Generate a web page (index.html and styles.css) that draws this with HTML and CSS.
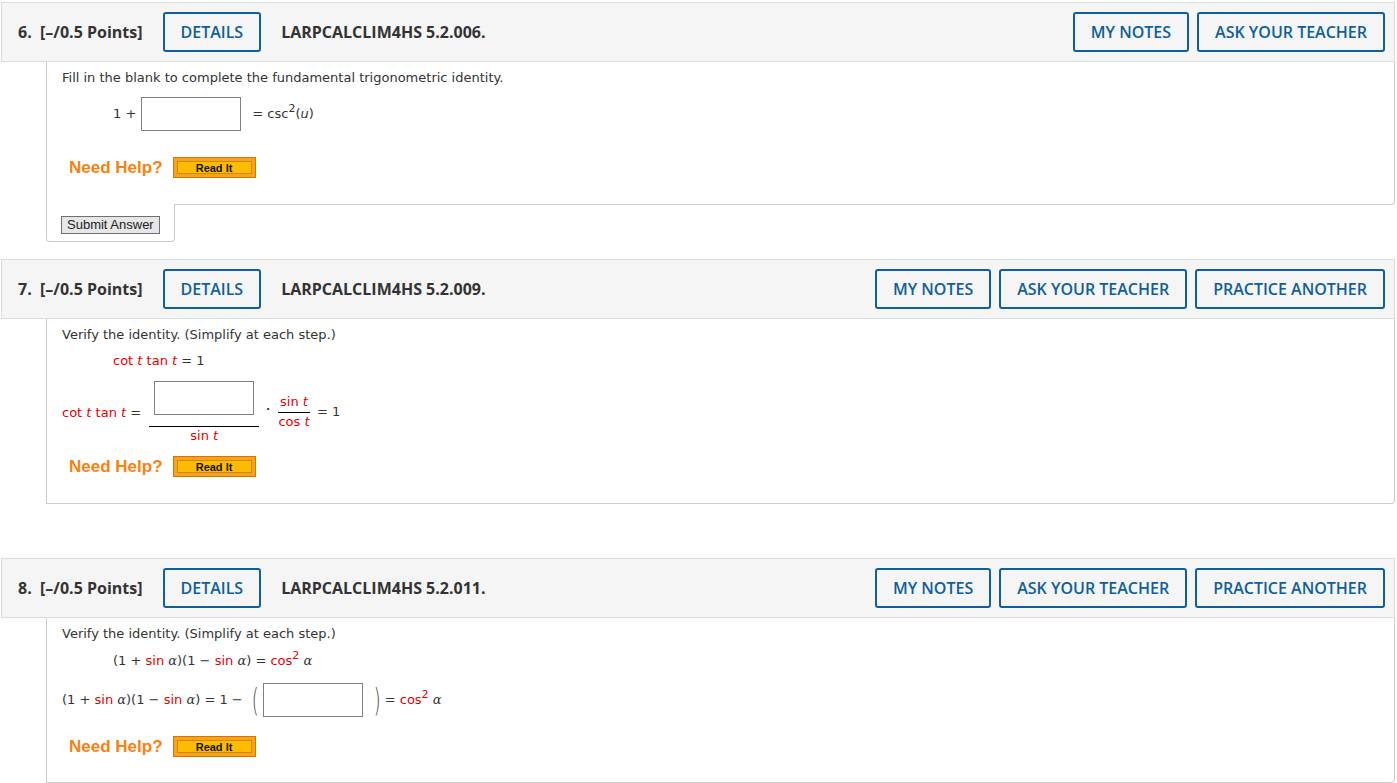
FILE: index.html
```html
<!DOCTYPE html>
<html>
<head>
<meta charset="utf-8">
<link rel="stylesheet" href="styles.css">
</head>
<body>
<div class="page">

  <section class="question q6">
    <div class="q-header">
      <span class="q-num">6.&nbsp; [–/0.5 Points]</span>
      <button class="hbtn">DETAILS</button>
      <span class="q-code">LARPCALCLIM4HS 5.2.006.</span>
      <span class="spacer"></span>
      <button class="hbtn">MY NOTES</button>
      <button class="hbtn">ASK YOUR TEACHER</button>
    </div>
    <div class="q-body">
      <p class="prompt">Fill in the blank to complete the fundamental trigonometric identity.</p>
      <div class="eq eq-fill">
        <span class="m">1 +</span>
        <span class="ans"></span>
        <span class="m">= csc<sup>2</sup>(<i>u</i>)</span>
      </div>
      <div class="help">
        <span class="need">Need Help?</span>
        <button class="readit">Read It</button>
      </div>
    </div>
    <div class="submit-tab">
      <button class="submit">Submit Answer</button>
    </div>
  </section>

  <section class="question q7">
    <div class="q-header">
      <span class="q-num">7.&nbsp; [–/0.5 Points]</span>
      <button class="hbtn">DETAILS</button>
      <span class="q-code">LARPCALCLIM4HS 5.2.009.</span>
      <span class="spacer"></span>
      <button class="hbtn">MY NOTES</button>
      <button class="hbtn">ASK YOUR TEACHER</button>
      <button class="hbtn">PRACTICE ANOTHER</button>
    </div>
    <div class="q-body">
      <p class="prompt">Verify the identity. (Simplify at each step.)</p>
      <div class="eq eq-given"><span class="r">cot</span> <i class="r">t</i> <span class="r">tan</span> <i class="r">t</i> = 1</div>
      <div class="eq eq-frac">
        <span class="m"><span class="r">cot</span> <i class="r">t</i> <span class="r">tan</span> <i class="r">t</i> =</span>
        <span class="bigfrac">
          <span class="ans"></span>
          <span class="bar"></span>
          <span class="den r">sin <i>t</i></span>
        </span>
        <span class="dot">·</span>
        <span class="smallfrac">
          <span class="num r">sin <i>t</i></span>
          <span class="den r">cos <i>t</i></span>
        </span>
        <span class="m">= 1</span>
      </div>
      <div class="help help-7">
        <span class="need">Need Help?</span>
        <button class="readit">Read It</button>
      </div>
    </div>
  </section>

  <section class="question q8">
    <div class="q-header">
      <span class="q-num">8.&nbsp; [–/0.5 Points]</span>
      <button class="hbtn">DETAILS</button>
      <span class="q-code">LARPCALCLIM4HS 5.2.011.</span>
      <span class="spacer"></span>
      <button class="hbtn">MY NOTES</button>
      <button class="hbtn">ASK YOUR TEACHER</button>
      <button class="hbtn">PRACTICE ANOTHER</button>
    </div>
    <div class="q-body">
      <p class="prompt">Verify the identity. (Simplify at each step.)</p>
      <div class="eq eq-given8">(1 + <span class="r">sin</span> <i class="al">α</i>)(1 − <span class="r">sin</span> <i class="al">α</i>) = <span class="r">cos<sup>2</sup></span> <i class="al">α</i></div>
      <div class="eq eq-paren">
        <span class="m">(1 + <span class="r">sin</span> <i class="al">α</i>)(1 − <span class="r">sin</span> <i class="al">α</i>) = 1 −</span>
        <span class="paren pl">(</span>
        <span class="ans"></span>
        <span class="paren pr">)</span>
        <span class="m">= <span class="r">cos<sup>2</sup></span> <i class="al">α</i></span>
      </div>
      <div class="help help-8">
        <span class="need">Need Help?</span>
        <button class="readit">Read It</button>
      </div>
    </div>
  </section>

</div>
</body>
</html>
```

FILE: styles.css
```css
html, body {
  margin: 0;
  padding: 0;
  background: #ffffff;
}

.page {
  padding: 2px 2px 0 1px;
}

.question {
  display: flex;
  flex-direction: column;
}

.q7 { margin-top: 17px; }
.q8 { margin-top: 54px; }

.q-header {
  display: flex;
  align-items: center;
  height: 58px;
  border: 1px solid #dcdcdc;
  background: #f5f5f5;
  padding: 0 9px 0 16px;
  font-family: "Open Sans", "Liberation Sans", sans-serif;
  color: #333333;
}

.q-num {
  font-size: 16px;
  font-weight: 700;
  margin-right: 20px;
}

.q-code {
  font-size: 16px;
  font-weight: 700;
  margin-left: 20px;
}

.spacer { flex: 1; }

.hbtn {
  height: 40px;
  padding: 0 16px;
  border: 2px solid #0f5f9a;
  border-radius: 3px;
  background: #f5f5f5;
  color: #0f5f9a;
  font-family: "Open Sans", "Liberation Sans", sans-serif;
  font-size: 16px;
  font-weight: 600;
  cursor: pointer;
}

.hbtn + .hbtn { margin-left: 8px; }

.q-body {
  margin-left: 45px;
  border: 1px solid #cccccc;
  border-top: none;
  border-bottom-right-radius: 4px;
  padding: 7px 15px 26px 15px;
  font-family: "DejaVu Sans", Verdana, sans-serif;
  font-size: 13px;
  color: #333333;
  background: #ffffff;
}

.q8 .q-body { padding-bottom: 25px; }

.prompt {
  margin: 0;
  line-height: 18px;
  height: 18px;
}

.eq {
  display: flex;
  align-items: center;
  line-height: 18px;
}

.eq sup {
  font-size: 11px;
  line-height: 0;
  vertical-align: 6px;
}

.r { color: #e60000; }

.al {
  font-family: "DejaVu Serif", "Liberation Serif", serif;
  font-size: 13px;
}

.eq-fill {
  margin: 10px 0 0 51px;
  height: 34px;
}
.eq-fill .ans { margin: 0 11px 0 5px; }

.ans {
  display: block;
  box-sizing: border-box;
  width: 100px;
  height: 34px;
  border: 1px solid #808080;
  background: #ffffff;
}

.eq-given {
  margin: 8px 0 0 51px;
  height: 18px;
  display: block;
}

.eq-frac {
  margin-top: 11px;
  height: 63px;
}

.bigfrac {
  display: flex;
  flex-direction: column;
  align-items: center;
  width: 110px;
  margin-left: 8px;
}
.bigfrac .bar {
  display: block;
  width: 110px;
  height: 1px;
  background: #000000;
  margin-top: 11px;
}
.bigfrac .den {
  line-height: 17px;
}

.dot {
  margin: 0 8px 6px 7px;
  font-weight: 700;
  font-size: 10px;
}

.smallfrac {
  display: flex;
  flex-direction: column;
  align-items: center;
  margin-top: -2px;
}
.smallfrac .num {
  line-height: 16px;
  border-bottom: 1px solid #000000;
  padding: 0 2px 2px;
}
.smallfrac .den {
  line-height: 16px;
  padding-top: 1px;
}
.eq-frac .m:last-child { margin-left: 7px; margin-top: -2px; }

.eq-given8 {
  display: block;
  margin: 9px 0 0 51px;
  height: 18px;
}

.eq-paren {
  margin-top: 12px;
  height: 35px;
}
.paren {
  display: block;
  width: 8px;
  text-align: center;
  font-family: "DejaVu Sans", sans-serif;
  font-size: 32px;
  font-weight: 200;
  line-height: 34px;
  color: #444444;
  transform: scaleX(0.55);
}
.paren.pl { margin: 0 5px 0 7px; }
.paren.pr { margin: 0 5px 0 9px; }

.help {
  display: flex;
  align-items: center;
  margin: 26px 0 0 7px;
  height: 21px;
}
.help-7 { margin-top: 12px; }
.help-8 { margin-top: 19px; }

.need {
  font-family: "Liberation Sans", Arial, sans-serif;
  font-weight: 700;
  font-size: 17px;
  color: #f7820f;
  margin-right: 10px;
}

.readit {
  box-sizing: border-box;
  width: 83px;
  height: 21px;
  padding: 0;
  border: 1px solid #d97300;
  background: #ffbb00;
  box-shadow: inset 0 0 0 3px #f7a21c, inset 0 0 0 4px #c98a10;
  font-family: "Liberation Sans", Arial, sans-serif;
  font-weight: 700;
  font-size: 11px;
  color: #111111;
}

.submit-tab {
  align-self: flex-start;
  box-sizing: border-box;
  width: 129px;
  height: 38px;
  margin: -1px 0 0 45px;
  border: 1px solid #cccccc;
  border-top: none;
  border-radius: 0 0 4px 4px;
  background: #ffffff;
  padding: 11px 0 0 14px;
}

.submit {
  box-sizing: border-box;
  height: 18px;
  padding: 0 5px;
  border: 1px solid #707070;
  background: #e6e6e6;
  font-family: "Liberation Sans", Arial, sans-serif;
  font-size: 13px;
  line-height: 16px;
  color: #222222;
}
```
